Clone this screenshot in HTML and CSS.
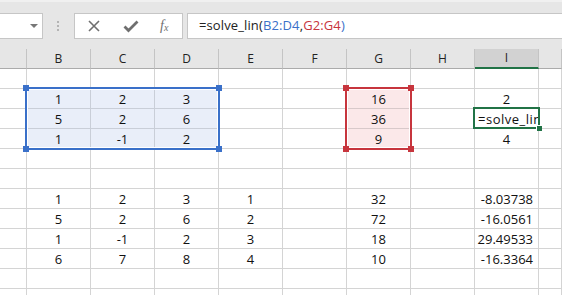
FILE: index.html
```html
<!DOCTYPE html>
<html lang="en">
<head>
  <meta charset="UTF-8">
  <title>solve_lin</title>
  <link rel="stylesheet" href="styles.css">
</head>
<body>
  <div class="toolbar">
    <div class="name-box">
      <span class="drop"></span>
    </div>
    <div class="grip"><i></i><i></i><i></i></div>
    <div class="buttons">
      <svg class="btn" width="14" height="14" viewBox="0 0 14 14"><path d="M2 2 L12 12 M12 2 L2 12" stroke="#6f6f6f" stroke-width="1.6" fill="none"/></svg>
      <svg class="btn" width="16" height="14" viewBox="0 0 16 14"><path d="M1.5 7.5 L5.5 11.5 L14.5 2.5" stroke="#6f6f6f" stroke-width="2.8" fill="none"/></svg>
      <span class="fx">f<sub>x</sub></span>
    </div>
    <div class="formula">=solve_lin(<span class="ref-blue">B2:D4</span>,<span class="ref-red">G2:G4</span><span class="ref-blue">)</span></div>
  </div>

  <div class="sheet">
    <div class="row head">
      <div class="cell"></div><div class="cell">B</div><div class="cell">C</div><div class="cell">D</div><div class="cell">E</div><div class="cell">F</div><div class="cell">G</div><div class="cell">H</div><div class="cell active-col">I</div><div class="cell"></div>
    </div>
    <div class="row">
      <div class="cell"></div><div class="cell"></div><div class="cell"></div><div class="cell"></div><div class="cell"></div><div class="cell"></div><div class="cell"></div><div class="cell"></div><div class="cell"></div><div class="cell"></div>
    </div>
    <div class="row">
      <div class="cell"></div><div class="cell blue">1</div><div class="cell blue">2</div><div class="cell blue">3</div><div class="cell"></div><div class="cell"></div><div class="cell red">16</div><div class="cell"></div><div class="cell">2</div><div class="cell"></div>
    </div>
    <div class="row">
      <div class="cell"></div><div class="cell blue">5</div><div class="cell blue">2</div><div class="cell blue">6</div><div class="cell"></div><div class="cell"></div><div class="cell red">36</div><div class="cell"></div><div class="cell left">=solve_lin</div><div class="cell"></div>
    </div>
    <div class="row">
      <div class="cell"></div><div class="cell blue">1</div><div class="cell blue">-1</div><div class="cell blue">2</div><div class="cell"></div><div class="cell"></div><div class="cell red">9</div><div class="cell"></div><div class="cell">4</div><div class="cell"></div>
    </div>
    <div class="row">
      <div class="cell"></div><div class="cell"></div><div class="cell"></div><div class="cell"></div><div class="cell"></div><div class="cell"></div><div class="cell"></div><div class="cell"></div><div class="cell"></div><div class="cell"></div>
    </div>
    <div class="row">
      <div class="cell"></div><div class="cell"></div><div class="cell"></div><div class="cell"></div><div class="cell"></div><div class="cell"></div><div class="cell"></div><div class="cell"></div><div class="cell"></div><div class="cell"></div>
    </div>
    <div class="row">
      <div class="cell"></div><div class="cell">1</div><div class="cell">2</div><div class="cell">3</div><div class="cell">1</div><div class="cell"></div><div class="cell">32</div><div class="cell"></div><div class="cell right">-8.03738</div><div class="cell"></div>
    </div>
    <div class="row">
      <div class="cell"></div><div class="cell">5</div><div class="cell">2</div><div class="cell">6</div><div class="cell">2</div><div class="cell"></div><div class="cell">72</div><div class="cell"></div><div class="cell right">-16.0561</div><div class="cell"></div>
    </div>
    <div class="row">
      <div class="cell"></div><div class="cell">1</div><div class="cell">-1</div><div class="cell">2</div><div class="cell">3</div><div class="cell"></div><div class="cell">18</div><div class="cell"></div><div class="cell right">29.49533</div><div class="cell"></div>
    </div>
    <div class="row">
      <div class="cell"></div><div class="cell">6</div><div class="cell">7</div><div class="cell">8</div><div class="cell">4</div><div class="cell"></div><div class="cell">10</div><div class="cell"></div><div class="cell right">-16.3364</div><div class="cell"></div>
    </div>
    <div class="row">
      <div class="cell"></div><div class="cell"></div><div class="cell"></div><div class="cell"></div><div class="cell"></div><div class="cell"></div><div class="cell"></div><div class="cell"></div><div class="cell"></div><div class="cell"></div>
    </div>
    <div class="row">
      <div class="cell"></div><div class="cell"></div><div class="cell"></div><div class="cell"></div><div class="cell"></div><div class="cell"></div><div class="cell"></div><div class="cell"></div><div class="cell"></div><div class="cell"></div>
    </div>

    <!-- range highlights drawn over the grid -->
    <div class="range range-blue">
      <span class="handle tl"></span><span class="handle tr"></span><span class="handle bl"></span><span class="handle br"></span>
    </div>
    <div class="range range-red">
      <span class="handle tl"></span><span class="handle tr"></span><span class="handle bl"></span><span class="handle br"></span>
    </div>
    <div class="active-cell"><span class="fill-handle"></span></div>
  </div>
</body>
</html>
```

FILE: styles.css
```css
body {
  margin: 0;
  width: 562px;
  height: 295px;
  overflow: hidden;
  background-color: #ffffff;
  font-family: "Open Sans", sans-serif;
}

/* formula bar */
.toolbar {
  display: flex;
  align-items: flex-start;
  height: 49px;
  padding-top: 11px;
  box-sizing: border-box;
  border-top: 2px solid #f0f0f0;
  background-color: #e6e6e6;
}

.name-box {
  position: relative;
  width: 44px;
  height: 26px;
  margin-left: -1px;
  box-sizing: border-box;
  background-color: #ffffff;
  border: 1px solid #c6c6c6;
}

.drop {
  position: absolute;
  left: 30px;
  top: 10px;
  border-left: 4px solid transparent;
  border-right: 4px solid transparent;
  border-top: 4px solid #777777;
}

.grip {
  display: flex;
  flex-direction: column;
  gap: 2px;
  margin: 8px 15px 0 14px;
}

.grip i {
  display: block;
  width: 2px;
  height: 2px;
  background-color: #b4b4b4;
}

.buttons {
  display: flex;
  align-items: center;
  width: 109px;
  height: 26px;
  box-sizing: border-box;
  padding-left: 12px;
  background-color: #ffffff;
  border: 1px solid #c6c6c6;
}

.btn {
  margin-right: 22px;
}

.buttons svg:nth-child(2) {
  margin-right: 21px;
}

.fx {
  font-family: "Liberation Serif", serif;
  font-style: italic;
  font-size: 14px;
  color: #6f6f6f;
  line-height: 1;
}

.fx sub {
  font-size: 10px;
  vertical-align: -1px;
}

.formula {
  flex: 1;
  height: 26px;
  margin-left: 4px;
  margin-right: -1px;
  box-sizing: border-box;
  padding-left: 11px;
  background-color: #ffffff;
  border: 1px solid #c6c6c6;
  font-family: "Open Sans", sans-serif;
  font-size: 13px;
  letter-spacing: 0.12px;
  line-height: 23px;
  color: #222222;
  white-space: nowrap;
}

.ref-blue {
  color: #3a70c9;
}

.ref-red {
  color: #c7353d;
}

/* sheet grid */
.sheet {
  position: relative;
}

.row {
  display: grid;
  grid-template-columns: 27px repeat(8, 64px) 1fr;
  height: 20px;
}

.cell {
  box-sizing: border-box;
  border-right: 1px solid #d4d4d4;
  border-bottom: 1px solid #d4d4d4;
  font-size: 13px;
  line-height: 20px;
  color: #111111;
  text-align: center;
  white-space: nowrap;
  overflow: hidden;
}

.head .cell {
  background-color: #e6e6e6;
  border-right-color: #c4c4c4;
  border-bottom-color: #ababab;
  font-size: 12px;
  line-height: 19px;
  color: #222222;
}

.head .active-col {
  background-color: #d2d2d2;
  border-bottom: 2px solid #217346;
  line-height: 18px;
}

.cell.left {
  text-align: left;
  padding-left: 3px;
  letter-spacing: 0.5px;
}

.cell.right {
  text-align: right;
  padding-right: 5px;
}

.cell.blue {
  background-color: #e9eef9;
  border-color: #c9ced8;
}

.cell.red {
  background-color: #fbe8e9;
  border-color: #d8c9ca;
}

.range {
  position: absolute;
  top: 38px;
  height: 63px;
  box-sizing: border-box;
  box-shadow: inset 0 0 0 1px #ffffff;
}

.range-blue {
  left: 25px;
  width: 195px;
  border: 2px solid #3a70c9;
}

.range-red {
  left: 345px;
  width: 67px;
  border: 2px solid #c7353d;
}

.handle {
  position: absolute;
  width: 6px;
  height: 6px;
}

.range-blue .handle {
  background-color: #3a70c9;
}

.range-red .handle {
  background-color: #c7353d;
}

.handle.tl { left: -4px; top: -4px; }
.handle.tr { right: -4px; top: -4px; }
.handle.bl { left: -4px; bottom: -4px; }
.handle.br { right: -4px; bottom: -4px; }

.active-cell {
  position: absolute;
  left: 473px;
  top: 58px;
  width: 67px;
  height: 22px;
  box-sizing: border-box;
  border: 2px solid #217346;
}

.fill-handle {
  position: absolute;
  right: -4px;
  bottom: -4px;
  width: 5px;
  height: 5px;
  background-color: #217346;
  border: 1px solid #ffffff;
  border-right: none;
  border-bottom: none;
}
```
